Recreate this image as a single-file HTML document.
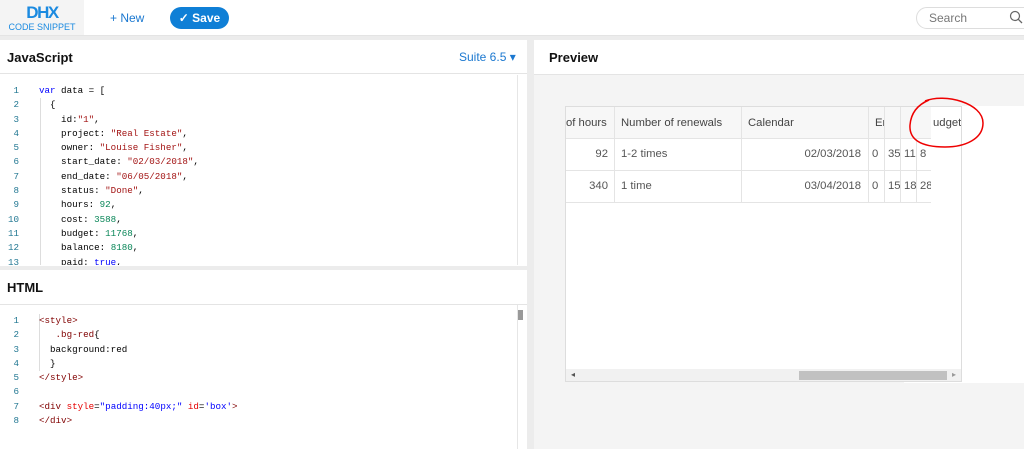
<!DOCTYPE html>
<html><head><meta charset="utf-8"><style>
*{margin:0;padding:0;box-sizing:border-box}
body{width:1024px;height:449px;overflow:hidden;background:#ececec;font-family:"Liberation Sans",sans-serif;position:relative}
.abs{position:absolute}
.top{left:0;top:0;width:1024px;height:36px;background:#fff;border-bottom:1px solid #e4e4e4}
.logo{left:0;top:0;width:84px;height:35px;background:#f4f4f4;text-align:center}
.mono{font-family:"Liberation Mono",monospace;font-size:9.2px;line-height:14.3px;white-space:pre}
.ln{color:#237893;text-align:right;width:19px}
.panel{background:#fff}
.hdr{font-weight:bold;font-size:13px;color:#111}
.s{color:#a31515}.k{color:#0000ff}.n{color:#098658}.t{color:#800000}.a{color:#e50000}
.th{font-size:11.3px;color:#444;line-height:32px}
.td{font-size:11.3px;color:#555;line-height:31px}
</style></head><body>
<div class="abs top"></div>
<div class="abs logo"><div style="color:#1b8ae0;font-weight:bold;font-size:17px;line-height:16px;padding-top:5px;letter-spacing:-1.5px">DHX</div><div style="color:#1b8ae0;font-size:9px;line-height:10px;padding-top:1px">CODE SNIPPET</div></div>
<div class="abs" style="left:110px;top:11px;font-size:12px;color:#1b78d0">+ New</div>
<div class="abs" style="left:170px;top:7px;width:59px;height:22px;border-radius:11px;background:#0f7fd6;color:#fff;font-size:12px;font-weight:bold;line-height:22px;text-align:center">✓ Save</div>
<div class="abs" style="left:916px;top:7px;width:120px;height:22px;border:1px solid #ddd;border-radius:11px;font-size:12px;color:#777;line-height:20px;padding-left:12px">Search</div>
<svg class="abs" style="left:1009px;top:10px" width="14" height="14"><circle cx="6" cy="6" r="4.5" fill="none" stroke="#666" stroke-width="1.2"/><path d="M9.3 9.3 L13 13" stroke="#666" stroke-width="1.3"/></svg>

<div class="abs panel" style="left:0;top:40px;width:527px;height:226px"></div>
<div class="abs hdr" style="left:7px;top:50px">JavaScript</div>
<div class="abs" style="left:459px;top:50px;font-size:12px;color:#1b78d0">Suite 6.5 ▾</div>
<div class="abs" style="left:0;top:73px;width:527px;height:1px;background:#e4e4e4"></div>
<div class="abs" style="left:517px;top:75px;width:1px;height:190px;background:#e6e6e6"></div>
<div class="abs" style="left:40px;top:98px;width:1px;height:167px;background:#ddd"></div>
<div class="abs mono ln" style="left:0;top:84px">1
2
3
4
5
6
7
8
9
10
11
12
13</div>
<div class="abs mono" style="left:39px;top:84px;color:#000;height:181px;overflow:hidden"><span class="k">var</span> data = [
  {
    id:<span class="s">"1"</span>,
    project: <span class="s">"Real Estate"</span>,
    owner: <span class="s">"Louise Fisher"</span>,
    start_date: <span class="s">"02/03/2018"</span>,
    end_date: <span class="s">"06/05/2018"</span>,
    status: <span class="s">"Done"</span>,
    hours: <span class="n">92</span>,
    cost: <span class="n">3588</span>,
    budget: <span class="n">11768</span>,
    balance: <span class="n">8180</span>,
    paid: <span class="k">true</span>,</div>

<div class="abs panel" style="left:0;top:270px;width:527px;height:179px"></div>
<div class="abs hdr" style="left:7px;top:280px">HTML</div>
<div class="abs" style="left:0;top:304px;width:527px;height:1px;background:#e4e4e4"></div>
<div class="abs" style="left:517px;top:305px;width:1px;height:144px;background:#e6e6e6"></div>
<div class="abs" style="left:518px;top:310px;width:5px;height:10px;background:#999"></div>
<div class="abs" style="left:39px;top:314px;width:1px;height:57px;background:#ddd"></div>
<div class="abs mono ln" style="left:0;top:314px">1
2
3
4
5
6
7
8</div>
<div class="abs mono" style="left:39px;top:314px;color:#000"><span class="t">&lt;style&gt;</span>
   <span class="t">.bg-red</span>{
  background:red
  }
<span class="t">&lt;/style&gt;</span>

<span class="t">&lt;div</span> <span class="a">style</span>=<span class="k">"padding:40px;"</span> <span class="a">id</span>=<span class="k">'box'</span><span class="t">&gt;</span>
<span class="t">&lt;/div&gt;</span></div>

<div class="abs panel" style="left:534px;top:40px;width:490px;height:35px;border-bottom:1px solid #e4e4e4"></div>
<div class="abs hdr" style="left:549px;top:50px">Preview</div>
<div class="abs" style="left:534px;top:75px;width:490px;height:374px;background:#f4f4f4"></div>
<div class="abs" style="left:904px;top:106px;width:120px;height:277px;background:#fff"></div>
<div class="abs" style="left:565px;top:106px;width:397px;height:276px;background:#fff;border:1px solid #ddd;overflow:hidden">
 <div class="abs" style="left:0;top:0;width:365px;height:32px;background:#f7f7f7;border-bottom:1px solid #e4e4e4"></div>
 <div class="abs" style="left:0;top:63px;width:365px;height:1px;background:#e4e4e4"></div>
 <div class="abs" style="left:0;top:95px;width:365px;height:1px;background:#e4e4e4"></div>
 <div class="abs" style="left:48px;top:0;width:1px;height:96px;background:#e4e4e4"></div>
 <div class="abs" style="left:175px;top:0;width:1px;height:96px;background:#e4e4e4"></div>
 <div class="abs" style="left:302px;top:0;width:1px;height:96px;background:#e4e4e4"></div>
 <div class="abs" style="left:318px;top:0;width:1px;height:96px;background:#e4e4e4"></div>
 <div class="abs" style="left:334px;top:0;width:1px;height:96px;background:#e4e4e4"></div>
 <div class="abs" style="left:350px;top:32px;width:1px;height:64px;background:#e4e4e4"></div>
 <div class="abs th" style="left:0;top:0">of hours</div>
 <div class="abs th" style="left:55px;top:0">Number of renewals</div>
 <div class="abs th" style="left:182px;top:0">Calendar</div>
 <div class="abs th" style="left:309px;top:0;width:9px;overflow:hidden">End</div>
 <div class="abs th" style="left:367px;top:0;width:30px;height:32px;background:#fff">udget</div>
 <div class="abs td" style="left:0;top:32px;width:42px;text-align:right">92</div>
 <div class="abs td" style="left:55px;top:32px">1-2 times</div>
 <div class="abs td" style="left:182px;top:32px;width:113px;text-align:right">02/03/2018</div>
 <div class="abs td" style="left:0;top:64px;width:42px;text-align:right">340</div>
 <div class="abs td" style="left:55px;top:64px">1 time</div>
 <div class="abs td" style="left:182px;top:64px;width:113px;text-align:right">03/04/2018</div>
 <div class="abs td" style="left:306px;top:32px;width:10px;overflow:hidden">0</div>
 <div class="abs td" style="left:306px;top:64px;width:10px;overflow:hidden">0</div>
 <div class="abs td" style="left:322px;top:32px;width:12px;overflow:hidden">35</div>
 <div class="abs td" style="left:338px;top:32px;width:12px;overflow:hidden">11</div>
 <div class="abs td" style="left:354px;top:32px;width:11px;overflow:hidden">8</div>
 <div class="abs td" style="left:322px;top:64px;width:12px;overflow:hidden">15</div>
 <div class="abs td" style="left:338px;top:64px;width:12px;overflow:hidden">18</div>
 <div class="abs td" style="left:354px;top:64px;width:11px;overflow:hidden">28</div>
 <div class="abs" style="left:0;top:262px;width:397px;height:13px;background:#f1f1f1"></div>
 <div class="abs" style="left:233px;top:264px;width:148px;height:9px;background:#c1c1c1"></div>
 <div class="abs" style="left:5px;top:263px;font-size:8px;color:#555">◂</div>
 <div class="abs" style="left:386px;top:263px;font-size:8px;color:#999">▸</div>
</div>
<svg class="abs" style="left:905px;top:95px" width="85" height="60"><path d="M20 6 C40 -2 78 8 78 28 C78 44 60 52 40 52 C15 52 4 44 5 30 C6 18 12 10 24 5" fill="none" stroke="#e00" stroke-width="1.5"/></svg>
</body></html>
